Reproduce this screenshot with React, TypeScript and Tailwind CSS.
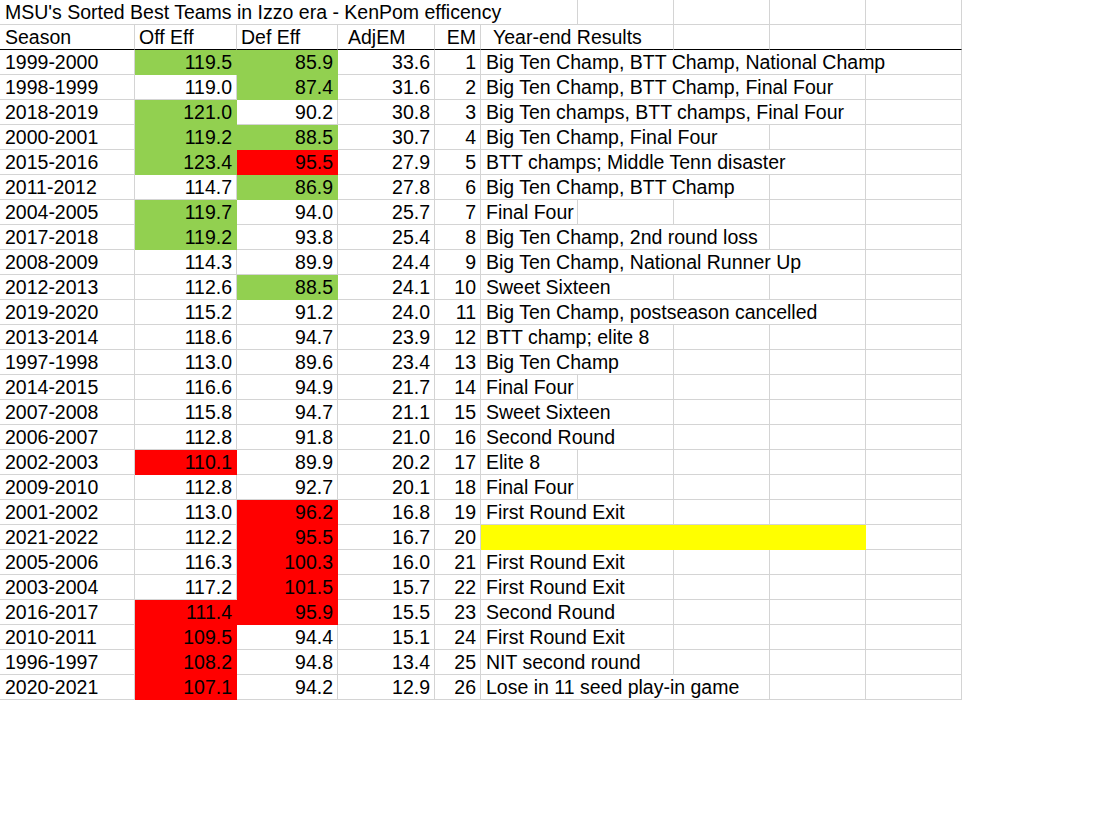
const rows: [string, string, string, string, number, string, string, string, number][] = [
  ["1999-2000", "119.5", "85.9", "33.6", 1, "Big Ten Champ, BTT Champ, National Champ", "g", "g", 5],
  ["1998-1999", "119.0", "87.4", "31.6", 2, "Big Ten Champ, BTT Champ, Final Four", "", "g", 4],
  ["2018-2019", "121.0", "90.2", "30.8", 3, "Big Ten champs, BTT champs, Final Four", "g", "", 4],
  ["2000-2001", "119.2", "88.5", "30.7", 4, "Big Ten Champ, Final Four", "g", "g", 3],
  ["2015-2016", "123.4", "95.5", "27.9", 5, "BTT champs; Middle Tenn disaster", "g", "r", 4],
  ["2011-2012", "114.7", "86.9", "27.8", 6, "Big Ten Champ, BTT Champ", "", "g", 3],
  ["2004-2005", "119.7", "94.0", "25.7", 7, "Final Four", "g", "", 1],
  ["2017-2018", "119.2", "93.8", "25.4", 8, "Big Ten Champ, 2nd round loss", "g", "", 3],
  ["2008-2009", "114.3", "89.9", "24.4", 9, "Big Ten Champ, National Runner Up", "", "", 4],
  ["2012-2013", "112.6", "88.5", "24.1", 10, "Sweet Sixteen", "", "g", 2],
  ["2019-2020", "115.2", "91.2", "24.0", 11, "Big Ten Champ, postseason cancelled", "", "", 4],
  ["2013-2014", "118.6", "94.7", "23.9", 12, "BTT champ; elite 8", "", "", 2],
  ["1997-1998", "113.0", "89.6", "23.4", 13, "Big Ten Champ", "", "", 2],
  ["2014-2015", "116.6", "94.9", "21.7", 14, "Final Four", "", "", 1],
  ["2007-2008", "115.8", "94.7", "21.1", 15, "Sweet Sixteen", "", "", 2],
  ["2006-2007", "112.8", "91.8", "21.0", 16, "Second Round", "", "", 2],
  ["2002-2003", "110.1", "89.9", "20.2", 17, "Elite 8", "r", "", 1],
  ["2009-2010", "112.8", "92.7", "20.1", 18, "Final Four", "", "", 1],
  ["2001-2002", "113.0", "96.2", "16.8", 19, "First Round Exit", "", "r", 2],
  ["2021-2022", "112.2", "95.5", "16.7", 20, "", "", "r", 4],
  ["2005-2006", "116.3", "100.3", "16.0", 21, "First Round Exit", "", "r", 2],
  ["2003-2004", "117.2", "101.5", "15.7", 22, "First Round Exit", "", "r", 2],
  ["2016-2017", "111.4", "95.9", "15.5", 23, "Second Round", "r", "r", 2],
  ["2010-2011", "109.5", "94.4", "15.1", 24, "First Round Exit", "r", "", 2],
  ["1996-1997", "108.2", "94.8", "13.4", 25, "NIT second round", "r", "", 2],
  ["2020-2021", "107.1", "94.2", "12.9", 26, "Lose in 11 seed play-in game", "r", "", 3],
];

const RW = [97, 96, 96, 96, 96];

function fill(c: string) {
  if (c === "g") return "bg-[#92d050] border-[#92d050]";
  if (c === "r") return "bg-[#ff0000] border-[#ff0000]";
  return "border-[#d4d4d4]";
}

function Results({ text, span, yellow, header }: { text: string; span: number; yellow?: boolean; header?: boolean }) {
  const w = RW.slice(0, span).reduce((a, b) => a + b, 0);
  return (
    <>
      <div
        style={{ width: w }}
        className={`h-full border-r border-b whitespace-nowrap overflow-hidden ${yellow ? "bg-[#ffff00] border-[#ffff00]" : "border-[#d4d4d4]"} ${header ? "pl-[12px] border-b-black" : "pl-[5px]"}`}
      >
        {text}
      </div>
      {RW.slice(span).map((cw, i) => (
        <div key={i} style={{ width: cw }} className={`h-full border-r border-b border-[#d4d4d4] ${header ? "border-b-black" : ""}`} />
      ))}
    </>
  );
}

export default function App() {
  return (
    <div className="w-[1108px] h-[820px] bg-white text-black text-[19.5px] leading-[24px]" style={{ fontFamily: '"Liberation Sans", Arial, sans-serif' }}>
      <div className="flex h-[25px]">
        <div className="w-[578px] h-full border-r border-b border-[#d4d4d4] pl-[5px] whitespace-nowrap">
          MSU's Sorted Best Teams in Izzo era - KenPom efficency
        </div>
        {RW.slice(1).map((cw, i) => (
          <div key={i} style={{ width: cw }} className="h-full border-r border-b border-[#d4d4d4]" />
        ))}
      </div>
      <div className="flex h-[25px]">
        <div className="w-[135px] h-full border-r border-[#d4d4d4] border-b border-b-black pl-[5px]">Season</div>
        <div className="w-[102px] h-full border-r border-[#d4d4d4] border-b border-b-black pl-[4px]">Off Eff</div>
        <div className="w-[101px] h-full border-r border-[#d4d4d4] border-b border-b-black pl-[4px]">Def Eff</div>
        <div className="w-[97px] h-full border-r border-[#d4d4d4] border-b border-b-black pl-[10px]">AdjEM</div>
        <div className="w-[46px] h-full border-r border-[#d4d4d4] border-b border-b-black text-right pr-[4px]">EM</div>
        <Results text="Year-end Results" span={2} header />
      </div>
      {rows.map((r) => (
        <div key={r[0]} className="flex h-[25px]">
          <div className="w-[135px] h-full border-r border-b border-[#d4d4d4] pl-[5px]">{r[0]}</div>
          <div className={`w-[102px] h-full border-r border-b text-right pr-[4px] ${fill(r[6])}`}>{r[1]}</div>
          <div className={`w-[101px] h-full border-r border-b text-right pr-[4px] ${fill(r[7])}`}>{r[2]}</div>
          <div className="w-[97px] h-full border-r border-b border-[#d4d4d4] text-right pr-[4px]">{r[3]}</div>
          <div className="w-[46px] h-full border-r border-b border-[#d4d4d4] text-right pr-[4px]">{r[4]}</div>
          <Results text={r[5]} span={r[8]} yellow={r[4] === 20} />
        </div>
      ))}
    </div>
  );
}
